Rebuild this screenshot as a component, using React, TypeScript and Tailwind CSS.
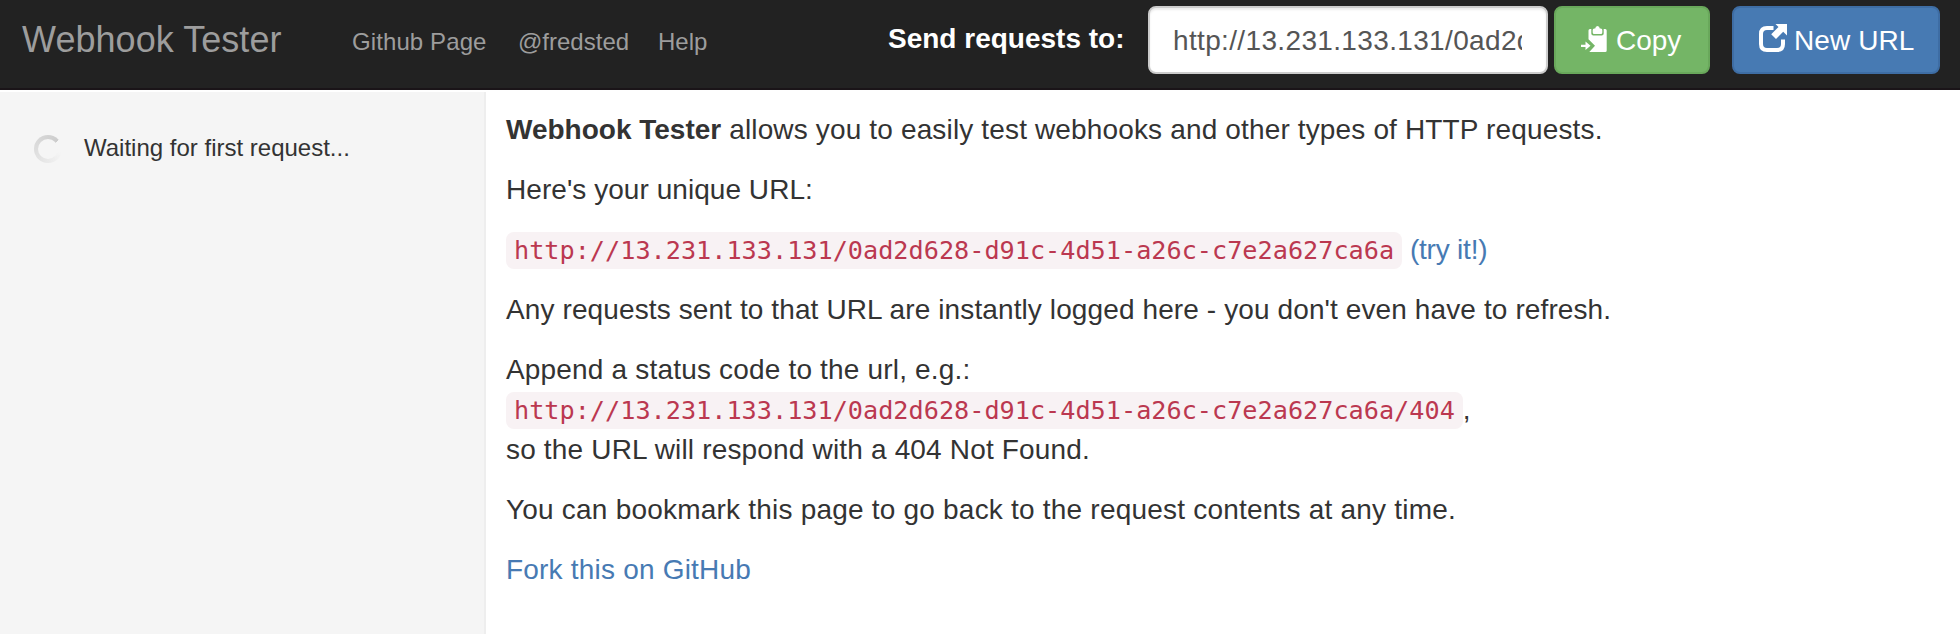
import * as React from "react"
import { clsx } from "clsx"

const HOOK_URL = "http://13.231.133.131/0ad2d628-d91c-4d51-a26c-c7e2a627ca6a"

const navLinks = [
  { label: "Github Page", className: "w-[134px] tracking-[0.1px]" },
  { label: "@fredsted", className: "w-[108px]" },
  { label: "Help", className: "w-[52px]" },
]

// Icons
function PasteIcon() {
  return (
    <svg className="mb-1 shrink-0" width="28" height="28" viewBox="0 0 28 28" fill="currentColor">
      <path d="M8.500 6.500Q8.500 5 10 5h1.300v4.500q0 2 2 2h8.400q2 0 2-2V5h1.500q1.500 0 1.500 1.500v20q0 1.500-1.500 1.500H9.300L15 21.800l-6.500-6.500z" />
      <path d="M12.700 6q0-1.500 1.500-1.500h1Q15.500 2 17.500 2t2.300 2.500h1q1.500 0 1.500 1.500v2.500q0 1.500-1.500 1.500h-6.600q-1.500 0-1.500-1.500z" />
      <path d="M1 20.700h4.500v-3.200l5 4.300-5 4.300v-3H1z" />
    </svg>
  )
}

function NewWindowIcon() {
  return (
    <svg
      className="mb-1 shrink-0 overflow-visible"
      width="28"
      height="28"
      viewBox="0 0 28 28"
      fill="currentColor"
    >
      <path
        d="M15.500 4H9Q3 4 3 10v10q0 6 6 6h10q6 0 6-6v-4.500"
        fill="none"
        stroke="currentColor"
        strokeWidth="4"
      />
      <path d="M17.500 0H29v11.500l-3.800-3.800-7.200 7.300-4.800-4.800 7.300-7.200z" />
    </svg>
  )
}

function Spinner() {
  return (
    <div className="size-[28px] rounded-full bg-[conic-gradient(from_50deg,#f5f5f5,#f5f5f5_15%,#e2e2e2_50%,#cccccc)] p-1">
      <div className="size-full rounded-full bg-[#f5f5f5]" />
    </div>
  )
}

function Button({ className, children }: React.ComponentProps<"button">) {
  return (
    <button
      className={clsx(
        "flex h-[68px] items-center gap-2 rounded-lg border-2 pl-6 text-[28px] whitespace-nowrap text-white",
        className
      )}
    >
      {children}
    </button>
  )
}

function Code({ children }: { children: React.ReactNode }) {
  return (
    <code className="rounded-lg bg-[#f8f2f4] px-2 py-1 font-['DejaVu_Sans_Mono',monospace] text-[25.200px] leading-[30px] tracking-[0.010px] text-[#bb3850]">
      {children}
    </code>
  )
}

function Navbar() {
  return (
    <nav className="flex h-[90px] items-start border-b-2 border-[#1a1418] bg-[#222] pl-[22px] text-[#9d9d9d]">
      <a className="w-[330px] pt-5 text-[36px] leading-[40px] tracking-[0.050px] whitespace-nowrap">Webhook Tester</a>
      <div className="flex w-[536px] gap-8 pt-[22px] text-[24px] leading-[40px]">
        {navLinks.map((link) => (
          <a key={link.label} className={clsx("whitespace-nowrap", link.className)}>
            {link.label}
          </a>
        ))}
      </div>
      <label className="w-[260px] pt-[19px] text-[28px] leading-[40px] font-bold whitespace-nowrap text-white">
        Send requests to:
      </label>
      <div className="flex pt-1.5">
        <input
          readOnly
          value={HOOK_URL}
          className="h-[68px] w-[400px] rounded-lg border-2 border-[#ccc] bg-white pt-0.5 pr-6 pl-[23px] text-[28px] tracking-[0.350px] text-[#555] shadow-[inset_0_2px_2px_rgba(0,0,0,0.075)]"
        />
        <Button className="ml-1.5 w-[156px] border-[#69a85b] bg-[#74b566]">
          <PasteIcon />
          <span className="pt-0.5">Copy</span>
        </Button>
        <Button className="ml-[22px] w-[208px] border-[#3e6da4] bg-[#477ab3]">
          <NewWindowIcon />
          <span className="pt-0.5 tracking-[0.1px]">New URL</span>
        </Button>
      </div>
    </nav>
  )
}

export default function App() {
  return (
    <div className="flex h-[634px] w-[1960px] flex-col overflow-hidden bg-white font-['Liberation_Sans',Arial,sans-serif] text-[#333]">
      <Navbar />
      <div className="mt-0.5 flex flex-1">
        <aside className="flex w-[486px] items-start border-r-2 border-[#eee] bg-[#f5f5f5] pt-9 pl-[34px]">
          <div className="pt-[7px]">
            <Spinner />
          </div>
          <p className="pl-[22px] text-[24px] leading-[40px]">Waiting for first request...</p>
        </aside>
        <main className="flex flex-1 flex-col gap-5 pt-[18px] pl-5 text-[28px] leading-[40px]">
          <p>
            <strong>Webhook Tester</strong>
            <span className="tracking-[0.150px]">
              {" "}
              allows you to easily test webhooks and other types of HTTP requests.
            </span>
          </p>
          <p className="tracking-[0.050px]">Here's your unique URL:</p>
          <p className="h-10">
            <Code>{HOOK_URL}</Code> <a className="tracking-[-0.2px] text-[#477ab3]">(try it!)</a>
          </p>
          <p className="tracking-[0.110px]">
            Any requests sent to that URL are instantly logged here - you don't even have to refresh.
          </p>
          <p className="h-[120px]">
            <span className="tracking-[0.180px]">Append a status code to the url, e.g.:</span>
            <br />
            <Code>{HOOK_URL}/404</Code>,
            <br />
            <span className="tracking-[0.170px]">so the URL will respond with a 404 Not Found.</span>
          </p>
          <p className="tracking-[0.210px]">
            You can bookmark this page to go back to the request contents at any time.
          </p>
          <p>
            <a className="tracking-[0.2px] text-[#477ab3]">Fork this on GitHub</a>
          </p>
        </main>
      </div>
    </div>
  )
}
